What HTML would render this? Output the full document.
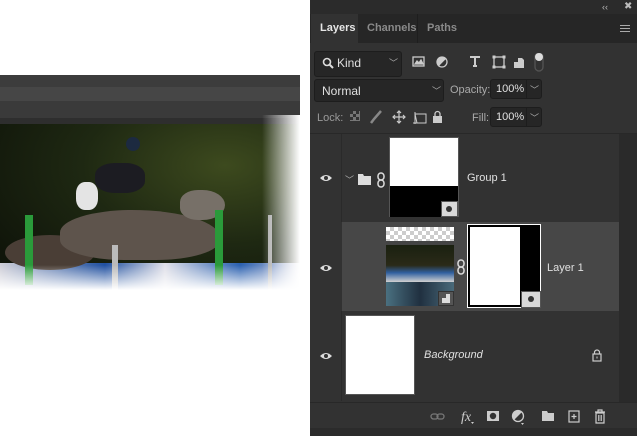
<!DOCTYPE html>
<html><head><meta charset="utf-8"><style>
*{margin:0;padding:0;box-sizing:border-box}
body{width:637px;height:436px;overflow:hidden;background:#fff;font-family:"Liberation Sans",sans-serif;position:relative}
.a{position:absolute}
.t{color:#cfcfcf;font-size:11px}
.box{position:absolute;background:#262626;border:1px solid #1d1d1d;border-radius:3px}
</style></head><body>
<!-- left image -->
<div class="a" style="left:0;top:75px;width:300px;height:215px;overflow:hidden">
 <div class="a" style="left:0;top:0;width:300px;height:12px;background:#3c3c3c"></div>
 <div class="a" style="left:0;top:12px;width:300px;height:14px;background:#464646"></div>
 <div class="a" style="left:0;top:26px;width:300px;height:17px;background:#3a3a3a"></div>
 <div class="a" style="left:0;top:43px;width:300px;height:6px;background:#2e2e2e"></div>
 <div class="a" style="left:0;top:49px;width:300px;height:166px;background:radial-gradient(ellipse at 75% 25%,#3d4a1e 0%,#1e2812 45%,#10150a 85%)"></div>
 <div class="a" style="left:0;top:188px;width:300px;height:27px;background:linear-gradient(90deg,#cfcfd8,#2050a0 35%,#e0e0e8 55%,#2a60b0 80%,#ccd)"></div>
 <div class="a" style="left:5px;top:160px;width:90px;height:35px;border-radius:50%;background:#4a3e36"></div>
 <div class="a" style="left:60px;top:135px;width:160px;height:50px;border-radius:45% 55% 40% 40%;background:#5e544c"></div>
 <div class="a" style="left:180px;top:115px;width:45px;height:30px;border-radius:40% 50% 50% 40%;background:#777068"></div>
 <div class="a" style="left:76px;top:107px;width:22px;height:28px;border-radius:40%;background:#e4e4e4"></div>
 <div class="a" style="left:95px;top:88px;width:50px;height:30px;border-radius:40%;background:#1c1c22"></div>
 <div class="a" style="left:126px;top:62px;width:14px;height:14px;border-radius:50%;background:#1c2a40"></div>
 <div class="a" style="left:25px;top:140px;width:8px;height:70px;background:#2a9a3a"></div>
 <div class="a" style="left:215px;top:135px;width:8px;height:75px;background:#2a9a3a"></div>
 <div class="a" style="left:112px;top:170px;width:6px;height:45px;background:#bbb"></div>
 <div class="a" style="left:268px;top:140px;width:4px;height:75px;background:#aaa"></div>
 <div class="a" style="left:262px;top:40px;width:38px;height:175px;background:linear-gradient(90deg,rgba(255,255,255,0),#fff)"></div>
 <div class="a" style="left:0;top:190px;width:300px;height:25px;background:linear-gradient(rgba(255,255,255,0),#fff)"></div>
</div>
<!-- panel -->
<div class="a" style="left:310px;top:0;width:327px;height:436px;background:#323232"></div>
<div class="a" style="left:310px;top:0;width:327px;height:14px;background:#2b2b2b"></div>
<div class="a t" style="left:602px;top:2px;font-size:9px;color:#bbb">‹‹</div>
<div class="a t" style="left:624px;top:1px;font-size:10px;color:#bbb">✖</div>
<div class="a" style="left:310px;top:14px;width:327px;height:29px;background:#262626"></div>
<div class="a" style="left:311px;top:14px;width:47px;height:29px;background:#323232"></div>
<div class="a t" style="left:320px;top:22px;color:#e6e6e6;font-weight:bold">Layers</div>
<div class="a t" style="left:367px;top:22px;color:#8a8a8a;font-weight:bold">Channels</div>
<div class="a" style="left:417px;top:14px;width:1px;height:29px;background:#1e1e1e"></div>
<div class="a t" style="left:427px;top:22px;color:#8a8a8a;font-weight:bold">Paths</div>
<div class="a" style="left:620px;top:25px;width:10px;height:1px;background:#aaa;box-shadow:0 3px #aaa,0 6px #aaa"></div>
<!-- kind row -->
<div class="box" style="left:314px;top:51px;width:88px;height:26px"></div>
<svg class="a" style="left:322px;top:57px" width="12" height="12"><circle cx="5" cy="5" r="3.5" fill="none" stroke="#ddd" stroke-width="1.6"/><path d="M7.5 7.5L11 11" stroke="#ddd" stroke-width="2"/></svg>
<div class="a t" style="left:337px;top:56px;color:#e0e0e0;font-size:12px">Kind</div>
<div class="a t" style="left:389px;top:56px;color:#aaa;font-size:9px">﹀</div>
<svg class="a" style="left:412px;top:53px" width="135" height="20" fill="none" stroke="#ccc" stroke-width="1.3">
<rect x="1" y="4" width="11" height="9"/><path d="M3 11l2-3 2 2 2-3 2 4z" fill="#ccc"/>
<circle cx="30" cy="9" r="5"/><path d="M26.5 12.5A5 5 0 0 1 33.5 5.5z" fill="#ccc"/>
<path d="M58 4h10M63 4v9M61 13h4" stroke-width="2"/>
<rect x="82" y="4" width="10" height="10"/><rect x="80.5" y="2.5" width="3" height="3" fill="#ccc" stroke="none"/><rect x="90.5" y="2.5" width="3" height="3" fill="#ccc" stroke="none"/><rect x="80.5" y="12.5" width="3" height="3" fill="#ccc" stroke="none"/><rect x="90.5" y="12.5" width="3" height="3" fill="#ccc" stroke="none"/>
<path d="M102 9h4v6h-4zM106 5h4l2 2v8h-6" fill="#ccc" stroke="none"/>
<rect x="123" y="0" width="8" height="18" rx="4" stroke="#555"/><circle cx="127" cy="4" r="4" fill="#ddd" stroke="none"/>
</svg>
<!-- normal row -->
<div class="box" style="left:314px;top:79px;width:130px;height:23px"></div>
<div class="a t" style="left:322px;top:84px;color:#e0e0e0;font-size:12px">Normal</div>
<div class="a t" style="left:432px;top:84px;color:#aaa;font-size:9px">﹀</div>
<div class="a t" style="left:450px;top:84px;color:#aaa">Opacity:</div>
<div class="box" style="left:490px;top:79px;width:52px;height:20px"></div>
<div class="a" style="left:526px;top:79px;width:1px;height:20px;background:#1d1d1d"></div>
<div class="a t" style="left:496px;top:83px;color:#e0e0e0">100%</div>
<div class="a t" style="left:530px;top:83px;color:#aaa;font-size:9px">﹀</div>
<!-- lock row -->
<div class="a t" style="left:317px;top:112px;color:#999">Lock:</div>
<svg class="a" style="left:349px;top:110px" width="95" height="16">
<rect x="1" y="1" width="10" height="10" fill="#777"/><rect x="1" y="1" width="3" height="3" fill="#333"/><rect x="7" y="1" width="3" height="3" fill="#333"/><rect x="4" y="4" width="3" height="3" fill="#333"/><rect x="1" y="7" width="3" height="3" fill="#333"/><rect x="7" y="7" width="3" height="3" fill="#333"/>
<path d="M22 13l3-4 7-8" stroke="#888" stroke-width="2.5"/>
<path d="M50 1v12M44 7h12M48 3l2-2 2 2M48 11l2 2 2-2M46 5l-2 2 2 2M54 5l2 2-2 2" stroke="#ccc" stroke-width="1.2" fill="none"/>
<path d="M66 4h11v9h-9zM66 2v12M64 13h12" stroke="#ccc" stroke-width="1" fill="none"/>
<rect x="84" y="6" width="9" height="7" fill="#ccc"/><path d="M86 6V4a2.5 2.5 0 0 1 5 0v2" stroke="#ccc" fill="none" stroke-width="1.3"/>
</svg>
<div class="a t" style="left:472px;top:112px;color:#aaa">Fill:</div>
<div class="box" style="left:490px;top:107px;width:52px;height:20px"></div>
<div class="a" style="left:526px;top:107px;width:1px;height:20px;background:#1d1d1d"></div>
<div class="a t" style="left:496px;top:111px;color:#e0e0e0">100%</div>
<div class="a t" style="left:530px;top:111px;color:#aaa;font-size:9px">﹀</div>
<!-- layers list -->
<div class="a" style="left:310px;top:133px;width:327px;height:1px;background:#282828"></div>
<div class="a" style="left:619px;top:134px;width:18px;height:268px;background:#2a2a2a"></div>
<div class="a" style="left:341px;top:134px;width:1px;height:88px;background:#2a2a2a"></div>
<!-- group 1 -->
<svg class="a" style="left:319px;top:173px" width="14" height="10"><path d="M1 5Q7-1 13 5Q7 11 1 5z" fill="#ddd"/><circle cx="7" cy="5" r="2" fill="#323232"/></svg>
<div class="a t" style="left:345px;top:173px;color:#aaa;font-size:9px">﹀</div>
<svg class="a" style="left:357px;top:172px" width="30" height="16"><path d="M1 2h5l1 2h7v9H1z" fill="#ddd"/><rect x="21" y="1" width="6" height="7" rx="3" fill="none" stroke="#ddd" stroke-width="1.5"/><rect x="21" y="8" width="6" height="7" rx="3" fill="none" stroke="#ddd" stroke-width="1.5"/></svg>
<div class="a" style="left:389px;top:137px;width:70px;height:80px;background:#fff;border:1px solid #555"></div>
<div class="a" style="left:390px;top:186px;width:68px;height:31px;background:#000"></div>
<div class="a" style="left:441px;top:201px;width:17px;height:16px;background:#d8d8d8;border:1px solid #555"></div>
<div class="a" style="left:446px;top:206px;width:6px;height:6px;border-radius:50%;background:#333"></div>
<div class="a t" style="left:467px;top:172px;color:#e0e0e0">Group 1</div>
<!-- layer 1 -->
<div class="a" style="left:342px;top:222px;width:277px;height:89px;background:#474747"></div>
<svg class="a" style="left:319px;top:263px" width="14" height="10"><path d="M1 5Q7-1 13 5Q7 11 1 5z" fill="#ddd"/><circle cx="7" cy="5" r="2" fill="#323232"/></svg>
<div class="a" style="left:386px;top:227px;width:68px;height:14px;background:repeating-conic-gradient(#ccc 0 25%,#fff 0 50%) 0 0/8px 8px"></div>
<div class="a" style="left:386px;top:241px;width:68px;height:4px;background:#444"></div>
<div class="a" style="left:386px;top:245px;width:68px;height:37px;background:linear-gradient(#1a2010,#2a2a18 55%,#3060a0 75%,#d0d0d0)"></div>
<div class="a" style="left:386px;top:282px;width:68px;height:24px;background:linear-gradient(90deg,#4a7080,#203040 50%,#4a6a7a)"></div>
<div class="a" style="left:438px;top:291px;width:16px;height:15px;background:#555;border:1px solid #333"></div>
<svg class="a" style="left:441px;top:293px" width="10" height="10"><path d="M1 5h4v5H1zM5 1h4v9H5z" fill="#ddd"/></svg>
<svg class="a" style="left:456px;top:259px" width="10" height="16"><rect x="2" y="1" width="6" height="7" rx="3" fill="none" stroke="#ddd" stroke-width="1.5"/><rect x="2" y="8" width="6" height="7" rx="3" fill="none" stroke="#ddd" stroke-width="1.5"/></svg>
<div class="a" style="left:467px;top:224px;width:74px;height:84px;border:1px solid #fff;background:#000"></div>
<div class="a" style="left:470px;top:227px;width:50px;height:78px;background:#fff"></div>
<div class="a" style="left:521px;top:291px;width:20px;height:17px;background:#d8d8d8;border:1px solid #555"></div>
<div class="a" style="left:528px;top:296px;width:6px;height:6px;border-radius:50%;background:#333"></div>
<div class="a t" style="left:547px;top:262px;color:#e0e0e0">Layer 1</div>
<!-- background -->
<div class="a" style="left:341px;top:311px;width:1px;height:90px;background:#2a2a2a"></div>
<svg class="a" style="left:319px;top:351px" width="14" height="10"><path d="M1 5Q7-1 13 5Q7 11 1 5z" fill="#ddd"/><circle cx="7" cy="5" r="2" fill="#323232"/></svg>
<div class="a" style="left:345px;top:315px;width:70px;height:80px;background:#fff;border:1px solid #555"></div>
<div class="a t" style="left:424px;top:349px;color:#e0e0e0;font-style:italic">Background</div>
<svg class="a" style="left:592px;top:349px" width="10" height="13"><rect x="1" y="5" width="8" height="7" fill="none" stroke="#ccc" stroke-width="1.2"/><path d="M2.5 5V3.5a2.5 2.5 0 0 1 5 0V5" fill="none" stroke="#ccc" stroke-width="1.2"/><rect x="4.5" y="7.5" width="1" height="2" fill="#ccc"/></svg>
<!-- bottom bar -->
<div class="a" style="left:310px;top:402px;width:327px;height:1px;background:#282828"></div>
<div class="a" style="left:310px;top:428px;width:327px;height:8px;background:#2b2b2b"></div>
<svg class="a" style="left:430px;top:408px" width="180" height="18" fill="#ccc">
<rect x="1" y="6" width="7" height="5" rx="2.5" fill="none" stroke="#777" stroke-width="1.3"/><rect x="7" y="6" width="7" height="5" rx="2.5" fill="none" stroke="#777" stroke-width="1.3"/>
<text x="31" y="13" font-family="Liberation Serif,serif" font-style="italic" font-size="14" fill="#ccc">fx</text><path d="M41 14h3l-1.5 2z"/>
<rect x="57" y="3" width="12" height="10"/><circle cx="63" cy="8" r="3.2" fill="#323232"/>
<circle cx="88" cy="8" r="5.5" fill="none" stroke="#ccc" stroke-width="1.3"/><path d="M84 12L92 4A5.5 5.5 0 0 0 84 12z"/><path d="M91 15h3l-1.5 2z"/>
<path d="M112 3h5l1 2h6v8h-12z"/>
<rect x="139" y="3" width="10" height="11" fill="none" stroke="#ccc" stroke-width="1.2"/><path d="M144 6v5M141.5 8.5h5" stroke="#ccc" stroke-width="1.2"/>
<path d="M165 4h10M168 4V2h4v2M166 5h8v10h-8z" fill="none" stroke="#ccc" stroke-width="1.2"/><path d="M168.5 7v6M170 7v6M171.5 7v6" stroke="#ccc" stroke-width=".8"/>
</svg>
</body></html>
